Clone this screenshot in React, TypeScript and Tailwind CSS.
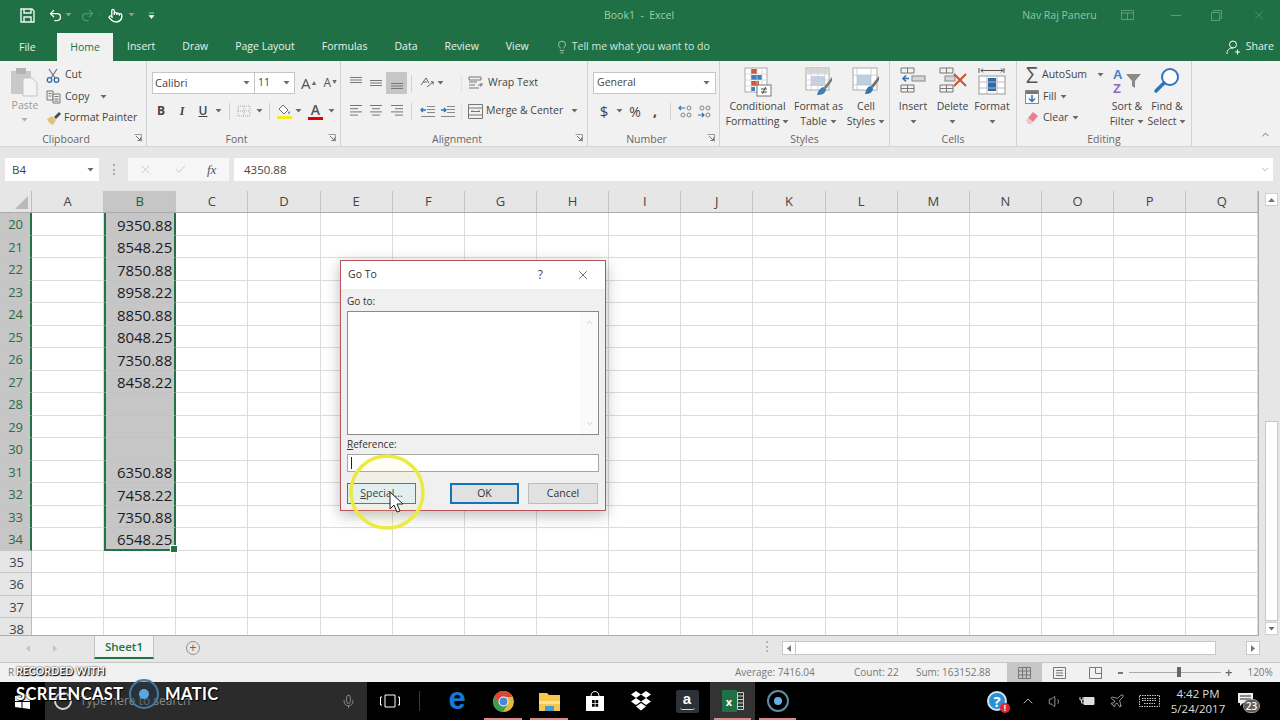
import type { ReactNode } from "react"
import { Check, ChevronUp, Lightbulb, Mic, Plane, Redo2, Undo2, Pointer, Volume1, X } from "lucide-react"

const columns = ["A", "B", "C", "D", "E", "F", "G", "H", "I", "J", "K", "L", "M", "N", "O", "P", "Q"]
const rows: [number, string][] = [
  [20, "9350.88"],
  [21, "8548.25"],
  [22, "7850.88"],
  [23, "8958.22"],
  [24, "8850.88"],
  [25, "8048.25"],
  [26, "7350.88"],
  [27, "8458.22"],
  [28, ""],
  [29, ""],
  [30, ""],
  [31, "6350.88"],
  [32, "7458.22"],
  [33, "7350.88"],
  [34, "6548.25"],
  [35, ""],
  [36, ""],
  [37, ""],
  [38, ""],
]

function Caret({ className = "" }: { className?: string }) {
  return (
    <svg width="7" height="4" viewBox="0 0 7 4" className={`shrink-0 ${className}`}>
      <path d="M0.5 0h6L3.5 3.5z" fill="#6a6a6a" />
    </svg>
  )
}

function Launcher() {
  return (
    <svg width="9" height="9" viewBox="0 0 9 9" className="absolute right-[3px] bottom-[3px]">
      <path d="M0.5 0.5h7v7" fill="none" stroke="#9a9a9a" />
      <path d="M2 2l4 4M3.500 6.500h3v-3" fill="none" stroke="#777" />
    </svg>
  )
}

function Group({ width, label, launcher, children }: { width: number; label: string; launcher?: boolean; children: ReactNode }) {
  return (
    <div className="relative flex flex-col shrink-0 h-[85px] border-r border-[#d2d2d2]" style={{ width }}>
      <div className="flex-1 min-h-0 pt-[2px]">{children}</div>
      <div className={`h-[16px] leading-[18px] text-center text-[10.5px] text-[#666] ${launcher ? "pr-[14px]" : ""}`}>{label}</div>
      {launcher && <Launcher />}
    </div>
  )
}

function AlignLines({ kind, y = 0 }: { kind: "left" | "center" | "right" | "top" | "middle" | "bottom"; y?: number }) {
  const lines =
    kind === "left"
      ? [[1, 13], [1, 9], [1, 13], [1, 9]]
      : kind === "center"
        ? [[1, 13], [3, 11], [1, 13], [3, 11]]
        : kind === "right"
          ? [[1, 13], [5, 13], [1, 13], [5, 13]]
          : [[1, 13], [1, 13], [1, 13]]
  const start = kind === "top" ? 1 : kind === "middle" ? 4 : kind === "bottom" ? 7 : 1
  return (
    <svg width="14" height="14" viewBox="0 0 14 14" style={{ marginTop: y }}>
      {lines.map((l, i) => (
        <line key={i} x1={l[0]} x2={l[1]} y1={start + i * (lines.length === 3 ? 2.5 : 3.2) + 0.5} y2={start + i * (lines.length === 3 ? 2.5 : 3.2) + 0.5} stroke="#777" />
      ))}
    </svg>
  )
}

function Paste() {
  return (
    <svg width="28" height="30" viewBox="0 0 28 30">
      <rect x="1" y="4" width="20" height="23" rx="1" fill="#c9c9c9" />
      <rect x="6" y="1" width="10" height="6" fill="#b4b4b4" />
      <path d="M13 11h9l5 5v13H13z" fill="#f4f4f4" stroke="#c4c4c4" />
    </svg>
  )
}

function Scissors() {
  return (
    <svg width="14" height="15" viewBox="0 0 14 15" fill="none">
      <path d="M3 1l6 9M11 1L5 10" stroke="#7a7a7a" strokeWidth="1.300" />
      <circle cx="3.500" cy="12" r="2.300" stroke="#2b6cb0" strokeWidth="1.300" />
      <circle cx="10.500" cy="12" r="2.300" stroke="#2b6cb0" strokeWidth="1.300" />
    </svg>
  )
}

function CopyIcon() {
  return (
    <svg width="15" height="14" viewBox="0 0 15 14" fill="none" stroke="#777">
      <path d="M1 1h6v9H1zM2.500 3.500h3M2.500 6h3" />
      <path d="M7 4h7v9H7z" fill="#f1f1f1" />
      <path d="M8.500 6.500h4M8.500 9h4M8.500 11h4" />
    </svg>
  )
}

function Brush() {
  return (
    <svg width="16" height="15" viewBox="0 0 16 15">
      <path d="M1 8l5-3 4 4-3 5c-2-.5-5-3-6-6z" fill="#e2c17a" />
      <path d="M8 6l5-5 2 2-5 5z" fill="#4a4a4a" />
    </svg>
  )
}

function FillColor() {
  return (
    <div className="flex flex-col items-center w-[16px]">
      <svg width="15" height="12" viewBox="0 0 15 12" fill="none">
        <path d="M6 1l5 5-4 4-5-5z" fill="#fff" stroke="#666" />
        <path d="M12 7c1 1.500 1.500 2.500 0 3-1.300-.5-1-1.500 0-3z" fill="#3a7ec0" />
      </svg>
      <div className="w-[15px] h-[3px] bg-[#f5ec1f]" />
    </div>
  )
}

function CondFormat() {
  return (
    <svg width="28" height="30" viewBox="0 0 28 30">
      <rect x="1" y="1" width="22" height="24" fill="#fff" stroke="#aaa" />
      <rect x="7" y="2" width="6" height="5" fill="#c65d34" />
      <rect x="7" y="8" width="11" height="5" fill="#3f7fc1" />
      <rect x="7" y="14" width="8" height="5" fill="#c65d34" />
      <rect x="7" y="20" width="4" height="4" fill="#3f7fc1" />
      <path d="M7 1v24M13 1v24M18 1v24M1 7h22M1 13h22M1 19h22" stroke="#cfcfcf" fill="none" strokeWidth=".7" />
      <rect x="13" y="18" width="14" height="11" fill="#fff" stroke="#777" />
      <path d="M17 22h6M17 25h6M21.500 20l-3 7" stroke="#444" fill="none" />
    </svg>
  )
}

function FormatTable() {
  return (
    <svg width="28" height="30" viewBox="0 0 28 30">
      <rect x="1" y="1" width="23" height="22" fill="#fff" stroke="#aaa" />
      <rect x="1.500" y="1.500" width="22" height="5" fill="#d8d8d8" />
      <rect x="6" y="9" width="14" height="10" fill="#c3d3e3" />
      <path d="M6 1v22M13 1v22M20 1v22M1 7h23M1 13h23M1 18h23" stroke="#ccc" fill="none" strokeWidth=".7" />
      <path d="M27 10l-8 10 2 2 6-8z" fill="#7b7b7b" />
      <path d="M19 20c-3 0-6 3-7 8 4 0 9-1 9-6z" fill="#3e7fb8" />
    </svg>
  )
}

function CellStyles() {
  return (
    <svg width="28" height="30" viewBox="0 0 28 30">
      <rect x="1" y="1" width="24" height="22" fill="#fff" stroke="#aaa" />
      <rect x="5" y="8" width="14" height="10" fill="#bcd0e2" />
      <path d="M5 1v22M19 1v22M1 8h24M1 18h24" stroke="#bbb" fill="none" strokeWidth=".7" />
      <path d="M27 9l-8 10 2 2 6-8z" fill="#6f6f6f" />
      <path d="M19 19c-3 0-5 3-6 8 4 0 8-1 8-6z" fill="#2f76b5" />
    </svg>
  )
}

function InsertCells() {
  return (
    <svg width="27" height="26" viewBox="0 0 27 26" fill="none">
      <path d="M1 1h13v5H1zM7.500 1v5M1 18h13v7H1zM7.500 18v7M1 21.500h13" stroke="#777" />
      <rect x="12" y="9" width="13" height="5" fill="#d6d6d6" stroke="#888" />
      <path d="M9 11.500H3M6 8.500l-3 3 3 3" stroke="#2e74b5" strokeWidth="1.600" />
    </svg>
  )
}

function DeleteCells() {
  return (
    <svg width="28" height="26" viewBox="0 0 28 26" fill="none">
      <path d="M1 1h13v5H1zM7.500 1v5M1 18h13v7H1zM7.500 18v7M1 21.500h13" stroke="#777" />
      <rect x="6" y="9" width="10" height="5" fill="#d6d6d6" stroke="#888" />
      <path d="M15 7l12 12M27 7L15 19" stroke="#d24726" strokeWidth="1.800" />
    </svg>
  )
}

function FormatCells() {
  return (
    <svg width="28" height="30" viewBox="0 0 28 30" fill="none">
      <path d="M1 1v5M26 1v5M3 3.500h22M3 3.500l2-2M3 3.500l2 2M25 3.500l-2-2M25 3.500l-2 2" stroke="#555" />
      <rect x="1" y="9" width="26" height="18" fill="#fff" stroke="#999" />
      <rect x="10" y="11" width="8" height="13" fill="#2e6ca8" />
      <path d="M9 9v18M19 9v18M1 15h26M1 21h26" stroke="#bbb" />
    </svg>
  )
}

function Eraser() {
  return (
    <svg width="14" height="14" viewBox="0 0 14 14">
      <path d="M8 1l5 4-5 6-5-4z" fill="#ee7c8e" />
      <path d="M3 7l5 4-2 2H3L1 10z" fill="#f4c2ca" />
    </svg>
  )
}

function SortIcon() {
  return (
    <svg width="30" height="30" viewBox="0 0 30 30">
      <path d="M14 7h15l-6 7v7l-3-2v-5z" fill="#8a8a8a" />
      <text x="1" y="12" fontSize="13" fontWeight="700" fill="#3c83c5" fontFamily="'Liberation Sans',sans-serif">A</text>
      <text x="1" y="26" fontSize="13" fontWeight="700" fill="#8c6bb8" fontFamily="'Liberation Sans',sans-serif">Z</text>
    </svg>
  )
}

function FindIcon() {
  return (
    <svg width="28" height="28" viewBox="0 0 28 28" fill="none">
      <circle cx="17" cy="10" r="8" fill="#fff" stroke="#2e75b6" strokeWidth="2" />
      <path d="M11 16l-8 8" stroke="#2e75b6" strokeWidth="3.500" strokeLinecap="round" />
    </svg>
  )
}

function Big({ width, lines, caret, icon }: { width: number; lines: string[]; caret?: boolean; icon: ReactNode }) {
  return (
    <div className="flex flex-col items-center shrink-0" style={{ width }}>
      <div className="h-[36px] pt-[4px] flex items-start justify-center">{icon}</div>
      <div className="leading-[15px] text-center whitespace-nowrap">{lines[0]}</div>
      <div className="leading-[15px] flex items-center justify-center gap-[3px] whitespace-nowrap h-[15px]">
        {lines[1]}
        {caret && <Caret />}
      </div>
    </div>
  )
}

function Ribbon() {
  return (
    <div className="flex h-[86px] shrink-0 bg-[#f1f1f1] border-b border-[#d4d4d4] text-[10.5px] text-[#444]">
      <Group width={147} label="Clipboard" launcher>
        <div className="flex">
          <div className="w-[46px] flex flex-col items-center pl-[2px] pt-[4px] text-[#9a9a9a]">
            <Paste />
            <div className="mt-[1px] leading-[15px] ml-[2px]">Paste</div>
            <Caret className="mt-[5px] opacity-50" />
          </div>
          <div className="flex flex-col pt-[1px]">
            <div className="h-[22px] flex items-center gap-[5px]"><Scissors /><span>Cut</span></div>
            <div className="h-[21px] flex items-center gap-[4px]"><CopyIcon /><span>Copy</span><Caret className="ml-[6px]" /></div>
            <div className="h-[22px] flex items-center gap-[2px] whitespace-nowrap"><Brush /><span>Format Painter</span></div>
          </div>
        </div>
      </Group>
      <Group width={194} label="Font" launcher>
        <div className="pl-[5px] pt-[9px]">
          <div className="flex items-center h-[22px]">
            <div className="w-[103px] h-full bg-white border border-[#c6c6c6] flex items-center justify-between pl-[2px] pr-[4px] text-[11px]">Calibri<Caret /></div>
            <div className="w-[40px] h-full bg-white border border-l-0 border-[#c6c6c6] flex items-center justify-between pl-[3px] pr-[4px]">11<Caret /></div>
            <span className="ml-[6px] text-[15px] leading-none text-[#555]">A<sup className="text-[7px] text-[#666]">▲</sup></span>
            <span className="ml-[6px] text-[12px] leading-none text-[#555]">A<sup className="text-[7px] text-[#666]">▼</sup></span>
          </div>
          <div className="flex items-center h-[22px] mt-[6px]">
            <span className="w-[18px] text-center font-bold text-[12px]">B</span>
            <span className="w-[24px] text-center italic font-bold text-[12px] font-['Liberation_Serif',serif]">I</span>
            <span className="w-[18px] text-center underline text-[12px] font-semibold">U</span>
            <Caret className="ml-[3px]" />
            <div className="ml-[7px] w-px h-[17px] bg-[#d0d0d0]" />
            <svg width="14" height="12" viewBox="0 0 14 12" className="ml-[7px]" fill="none" stroke="#aaa" strokeDasharray="1 1">
              <path d="M1 1h12v10H1zM7 1v10M1 6h12" />
            </svg>
            <Caret className="ml-[5px]" />
            <div className="ml-[6px] w-px h-[17px] bg-[#d0d0d0]" />
            <div className="ml-[6px]"><FillColor /></div>
            <Caret className="ml-[3px]" />
            <div className="ml-[5px] w-[17px] flex flex-col items-center text-[14px] leading-[13px] font-semibold text-[#555]">A<div className="w-[15px] h-[3px] bg-[#e00000] mt-[1px]" /></div>
            <Caret className="ml-[4px]" />
          </div>
        </div>
      </Group>
      <Group width={247} label="Alignment" launcher>
        <div className="pl-[4px] pt-[9px]">
          <div className="flex items-center h-[22px]">
            <div className="w-[21px] flex justify-center"><AlignLines kind="top" /></div>
            <div className="w-[20px] flex justify-center"><AlignLines kind="middle" /></div>
            <div className="w-[21px] h-[22px] bg-[#c6c6c6] flex justify-center items-center"><AlignLines kind="bottom" /></div>
            <div className="ml-[4px] w-px h-[17px] bg-[#d0d0d0]" />
            <svg width="15" height="14" viewBox="0 0 15 14" className="ml-[8px]" fill="none" stroke="#666">
              <path d="M1 9l5-7 3 5M3 6h4M7 11l6-5M11 5.500l2.500 .5-.5 2.500" />
            </svg>
            <Caret className="ml-[2px]" />
            <div className="ml-[17px] w-px h-[17px] bg-[#e2e2e2]" />
            <svg width="16" height="14" viewBox="0 0 16 14" className="ml-[6px]" fill="none" stroke="#777">
              <path d="M1 1h12v3H1zM1 6h8M1 9h6M1 12h10M10 9h4v-2M14 9l-2-1.500M14 9l-2 1.500" />
            </svg>
            <span className="ml-[4px] whitespace-nowrap">Wrap Text</span>
          </div>
          <div className="flex items-center h-[22px] mt-[6px]">
            <div className="w-[21px] flex justify-center"><AlignLines kind="left" /></div>
            <div className="w-[20px] flex justify-center"><AlignLines kind="center" /></div>
            <div className="w-[21px] flex justify-center"><AlignLines kind="right" /></div>
            <div className="ml-[4px] w-px h-[17px] bg-[#d0d0d0]" />
            <svg width="16" height="13" viewBox="0 0 16 13" className="ml-[8px]" fill="none">
              <path d="M7 1.500h8M7 4.500h8M7 7.500h8M1 11.500h14" stroke="#888" />
              <path d="M6 5H1M3 3L1 5l2 2" stroke="#2e75b6" strokeWidth="1.400" />
            </svg>
            <svg width="16" height="13" viewBox="0 0 16 13" className="ml-[4px]" fill="none">
              <path d="M7 1.500h8M7 4.500h8M7 7.500h8M1 11.500h14" stroke="#888" />
              <path d="M1 5h5M4 3l2 2-2 2" stroke="#2e75b6" strokeWidth="1.400" />
            </svg>
            <div className="ml-[5px] w-px h-[17px] bg-[#e2e2e2]" />
            <svg width="15" height="15" viewBox="0 0 15 15" className="ml-[6px]" fill="none" stroke="#777">
              <path d="M.5 .5h14v14H.5zM.5 4h14M.5 11h14M3 7.500h9M3 7.500l1.500-1M12 7.500l-1.500-1" />
            </svg>
            <span className="ml-[3px] whitespace-nowrap">Merge &amp; Center</span>
            <Caret className="ml-[8px]" />
          </div>
        </div>
      </Group>
      <Group width={132} label="Number" launcher>
        <div className="pl-[5px] pt-[9px]">
          <div className="w-[123px] h-[22px] bg-white border border-[#c6c6c6] flex items-center justify-between pl-[3px] pr-[5px]">General<Caret /></div>
          <div className="flex items-center h-[22px] mt-[6px] pl-[5px]">
            <span className="text-[15px] w-[12px] text-center">$</span>
            <Caret className="ml-[6px]" />
            <span className="ml-[2px] text-[14px] w-[20px] text-center">%</span>
            <span className="ml-[5px] w-[10px] text-center font-bold text-[14px] leading-[10px]">,</span>
            <div className="ml-[10px] w-px h-[17px] bg-[#d0d0d0]" />
            <svg width="15" height="13" viewBox="0 0 15 13" className="ml-[7px]" fill="none" stroke="#777" strokeWidth=".9">
              <circle cx="11" cy="3" r="2" />
              <circle cx="5" cy="10" r="2" />
              <circle cx="11" cy="10" r="2" />
              <path d="M7 3H1M3 1L1 3l2 2" stroke="#2e75b6" strokeWidth="1.200" />
            </svg>
            <svg width="15" height="13" viewBox="0 0 15 13" className="ml-[4px]" fill="none" stroke="#777" strokeWidth=".9">
              <circle cx="5" cy="3" r="2" />
              <circle cx="11" cy="3" r="2" />
              <circle cx="11" cy="10" r="2" />
              <path d="M1 10h6M5 8l2 2-2 2" stroke="#2e75b6" strokeWidth="1.200" />
            </svg>
          </div>
        </div>
      </Group>
      <Group width={170} label="Styles">
        <div className="flex pl-[5px]">
          <Big width={65} lines={["Conditional", "Formatting"]} caret icon={<CondFormat />} />
          <Big width={57} lines={["Format as", "Table"]} caret icon={<FormatTable />} />
          <Big width={38} lines={["Cell", "Styles"]} caret icon={<CellStyles />} />
        </div>
      </Group>
      <Group width={127} label="Cells">
        <div className="flex pl-[4px]">
          <Big width={38} lines={["Insert", ""]} caret icon={<InsertCells />} />
          <Big width={41} lines={["Delete", ""]} caret icon={<DeleteCells />} />
          <Big width={38} lines={["Format", ""]} caret icon={<FormatCells />} />
        </div>
      </Group>
      <Group width={175} label="Editing">
        <div className="flex pl-[8px]">
          <div className="w-[82px] flex flex-col pt-[1px]">
            <div className="h-[22px] flex items-center gap-[3px]"><span className="w-[14px] text-[21px] leading-none text-center text-[#555]">Σ</span><span>AutoSum</span><Caret className="ml-[7px]" /></div>
            <div className="h-[21px] flex items-center gap-[4px]">
              <svg width="14" height="14" viewBox="0 0 14 14" fill="none">
                <rect x=".5" y=".5" width="13" height="13" fill="#fff" stroke="#888" />
                <rect x="1" y="1" width="12" height="3" fill="#777" />
                <path d="M7 5v6M4 8.500L7 11.500l3-3" stroke="#2e75b6" strokeWidth="1.500" />
              </svg>
              <span>Fill</span><Caret />
            </div>
            <div className="h-[22px] flex items-center gap-[4px]"><Eraser /><span>Clear</span><Caret /></div>
          </div>
          <Big width={40} lines={["Sort &", "Filter"]} caret icon={<SortIcon />} />
          <Big width={40} lines={["Find &", "Select"]} caret icon={<FindIcon />} />
        </div>
      </Group>
      <div className="flex-1 flex items-end justify-end pr-[9px] pb-[6px]">
        <ChevronUp size={11} strokeWidth={2} className="text-[#666]" />
      </div>
    </div>
  )
}

function TitleBar() {
  return (
    <div className="bg-[#1f7145] shrink-0">
      <div className="h-[30px] flex items-center relative">
        <svg width="15" height="15" viewBox="0 0 15 15" className="ml-[20px]" fill="none" stroke="#f4f4f4" strokeWidth="1.400">
          <path d="M1 1h11l2 2v11H1zM4 1v4h7V1M4 14V9h7v5" />
        </svg>
        <Undo2 size={15} strokeWidth={2} className="ml-[13px] text-white" />
        <Caret className="ml-[2px] invert" />
        <Redo2 size={15} strokeWidth={2} className="ml-[8px] text-[#4f9570]" />
        <Caret className="ml-[1px] opacity-30" />
        <Pointer size={15} strokeWidth={2} className="ml-[5px] text-white" />
        <Caret className="ml-[5px] invert" />
        <svg width="7" height="7" viewBox="0 0 7 7" className="ml-[13px]">
          <path d="M1 1h5M1 3.500h5L3.500 6.500z" fill="#fff" stroke="#fff" strokeWidth=".6" />
        </svg>
        <div className="ml-[449px] pt-[2px] text-[10.5px] text-[#9ccfb1] whitespace-pre">Book1  -  Excel</div>
        <div className="ml-[348px] pt-[2px] text-[10.5px] text-[#8fc6a6] whitespace-nowrap">Nav Raj Paneru</div>
        <svg width="13" height="10" viewBox="0 0 13 10" className="ml-[24px]" fill="none" stroke="#5c9c79">
          <path d="M.5 .5h12v9H.5zM.5 3h12M6.500 3v6.500" />
        </svg>
        <div className="ml-[37px] w-[10px] h-px bg-[#5c9c79]" />
        <svg width="11" height="11" viewBox="0 0 11 11" className="ml-[30px]" fill="none" stroke="#5c9c79">
          <path d="M.5 2.500h8v8h-8zM2.500 2.500v-2h8v8h-2" />
        </svg>
        <X size={14} strokeWidth={1} className="ml-[30px] text-[#6aa585]" />
      </div>
      <div className="h-[31px] flex items-end text-[10.5px] text-[#e6f1ea]">
        <div className="w-[57px] h-[30px] leading-[32px] pl-[19px]">File</div>
        <div className="w-[56px] h-[28px] leading-[29px] text-center bg-[#f1f1f1] text-[#1f7145]">Home</div>
        <div className="flex items-center h-[30px] gap-[27px] pl-[14px] pt-[2px]">
          <span>Insert</span>
          <span>Draw</span>
          <span className="whitespace-nowrap">Page Layout</span>
          <span>Formulas</span>
          <span>Data</span>
          <span>Review</span>
          <span>View</span>
        </div>
        <div className="flex items-center h-[30px] ml-[26px] pt-[2px] gap-[3px] text-[#d4e7da]">
          <Lightbulb size={14} strokeWidth={1.200} />
          <span className="whitespace-nowrap">Tell me what you want to do</span>
        </div>
        <div className="flex items-center h-[30px] ml-auto pr-[6px] pt-[2px] gap-[5px]">
          <svg width="15" height="15" viewBox="0 0 15 15" fill="none" stroke="#fff">
            <circle cx="7" cy="4.500" r="3.500" />
            <path d="M1 14c0-4 2-6 6-6M9 12h5M11.500 9.500v5" />
          </svg>
          <span>Share</span>
        </div>
      </div>
    </div>
  )
}

function FormulaBar() {
  return (
    <div className="h-[44px] shrink-0 bg-[#e6e6e6] flex items-start pt-[11px] text-[11.5px] text-[#444]">
      <div className="ml-[5px] w-[94px] h-[23px] bg-white flex items-center justify-between pl-[7px] pr-[5px]">B4<Caret /></div>
      <div className="ml-[14px] w-[2px] h-[11px] mt-[6px] border-l-2 border-dotted border-[#aaa]" />
      <div className="ml-[13px] w-[101px] h-[23px] bg-[#f6f6f6] flex items-center pl-[11px] text-[#c2c2c2]">
        <X size={13} strokeWidth={1.500} />
        <Check size={13} strokeWidth={1.500} className="ml-[22px]" />
        <span className="ml-[20px] italic text-[#555] font-['Liberation_Serif',serif] text-[13px]">fx</span>
      </div>
      <div className="ml-[5px] w-[1039px] h-[23px] bg-white flex items-center justify-between pl-[10px] pr-[4px]">
        4350.88
        <svg width="8" height="5" viewBox="0 0 8 5" fill="none" stroke="#bbb"><path d="M1 1l3 3 3-3" /></svg>
      </div>
    </div>
  )
}

function Sheet() {
  return (
    <div className="flex flex-1 min-h-0 bg-[#e6e6e6]">
      <div className="w-[1259px] flex flex-col overflow-hidden border-r border-b border-[#ababab] bg-white">
        <div className="flex h-[22px] shrink-0 bg-[#e6e6e6] border-b border-[#ababab] text-[13px] text-[#444]">
          <div className="w-[32px] shrink-0 flex items-end justify-end pr-[3px] pb-[3px] border-r border-[#bdbdbd]">
            <svg width="13" height="13" viewBox="0 0 13 13"><path d="M13 0v13H0z" fill="#b9b9b9" /></svg>
          </div>
          {columns.map((c) => (
            <div
              key={c}
              className={`w-[72.15px] shrink-0 flex items-center justify-center border-r border-[#c4c4c4] ${c === "B" ? "bg-[#c6c6c6] text-[#1f5f3c]" : ""}`}
            >
              {c}
            </div>
          ))}
        </div>
        {rows.map(([n, value]) => {
          const selected = n <= 34
          return (
            <div key={n} className="flex h-[22.5px] shrink-0">
              <div
                className={`w-[32px] shrink-0 flex items-center justify-end pr-[7px] pt-[2px] text-[13px] border-b border-[#c4c4c4] ${
                  selected ? "bg-[#c6c6c6] text-[#2c6b49] border-r-2 border-r-[#217346]" : "bg-[#e6e6e6] text-[#444] border-r border-r-[#bdbdbd]"
                }`}
              >
                {n}
              </div>
              {columns.map((c) => {
                if (c === "B" && selected) {
                  return (
                    <div
                      key={c}
                      className={`relative w-[72.15px] shrink-0 flex items-center justify-end pr-[2px] pt-[2px] bg-[#c6c6c6] text-[15px] text-[#1c1c1c] border-x-2 border-[#217346] ${
                        n === 34 ? "border-b-2" : "border-b border-b-[#c2c2c2]"
                      }`}
                    >
                      {value}
                      {n === 34 && <div className="absolute right-[-4px] bottom-[-4px] w-[6px] h-[6px] bg-[#217346] border border-white box-content" />}
                    </div>
                  )
                }
                return <div key={c} className="w-[72.15px] shrink-0 border-r border-b border-[#dcdcdc]" />
              })}
            </div>
          )
        })}
      </div>
      <div className="flex-1 flex flex-col items-center pt-[2px] pb-[1px] pl-[3px]">
        <div className="w-[13px] h-[13px] bg-white border border-[#d0d0d0] flex items-center justify-center">
          <svg width="7" height="4" viewBox="0 0 7 4"><path d="M0 4h7L3.500 0z" fill="#777" /></svg>
        </div>
        <div className="w-[13px] flex-1 flex flex-col justify-end mb-[1px]">
          <div className="h-[200px] bg-white border border-[#c8c8c8]" />
        </div>
        <div className="w-[13px] h-[13px] bg-white border border-[#d0d0d0] flex items-center justify-center">
          <Caret />
        </div>
      </div>
    </div>
  )
}

function TabBar() {
  return (
    <div className="h-[26px] shrink-0 bg-[#e6e6e6] flex items-start text-[11.5px]">
      <svg width="4" height="7" viewBox="0 0 4 7" className="ml-[26px] mt-[9px]"><path d="M4 0v7L0 3.500z" fill="#c4c4c4" /></svg>
      <svg width="4" height="7" viewBox="0 0 4 7" className="ml-[23px] mt-[9px]"><path d="M0 0v7l4-3.500z" fill="#c4c4c4" /></svg>
      <div className="ml-[37px] w-[60px] h-[23px] bg-[#f4f4f4] border-b-2 border-[#217346] border-x border-x-[#c4c4c4] flex items-center justify-center font-semibold text-[#217346]">
        Sheet1
      </div>
      <div className="ml-[32px] mt-[5px] w-[14px] h-[14px] rounded-full border border-[#8f8f8f] flex items-center justify-center text-[#666] text-[12px] leading-none">+</div>
      <div className="ml-[566px] mt-[5px] w-[2px] h-[11px] border-l-2 border-dotted border-[#b5b5b5]" />
      <div className="ml-[14px] mt-[5px] w-[14px] h-[14px] bg-white border border-[#c8c8c8] flex items-center justify-center">
        <svg width="4" height="7" viewBox="0 0 4 7"><path d="M4 0v7L0 3.500z" fill="#777" /></svg>
      </div>
      <div className="mt-[5px] w-[420px] h-[14px] bg-white border-y border-r border-[#c8c8c8]" />
      <div className="ml-[30px] mt-[5px] w-[14px] h-[14px] bg-white border border-[#c8c8c8] flex items-center justify-center">
        <svg width="4" height="7" viewBox="0 0 4 7"><path d="M0 0v7l4-3.500z" fill="#777" /></svg>
      </div>
    </div>
  )
}

function StatusBar() {
  return (
    <div className="h-[20px] shrink-0 bg-[#f1f1f1] border-t border-[#c6c6c6] flex items-center text-[10px] text-[#777] whitespace-nowrap">
      <span className="ml-[8px] w-[727px]">R</span>
      <span className="w-[119px]">Average: 7416.04</span>
      <span className="w-[62px]">Count: 22</span>
      <span className="w-[91px]">Sum: 163152.88</span>
      <div className="w-[35px] h-[20px] bg-[#c6c6c6] flex items-center justify-center">
        <svg width="13" height="12" viewBox="0 0 13 12" fill="none" stroke="#777"><path d="M.5 .5h12v11H.5zM4.500 .5v11M8.500 .5v11M.5 4h12M.5 8h12" /></svg>
      </div>
      <svg width="13" height="12" viewBox="0 0 13 12" className="ml-[11px]" fill="none" stroke="#777"><path d="M.5 .5h12v11H.5zM3 3.500h7M3 6h7M3 8.500h7" /></svg>
      <svg width="13" height="12" viewBox="0 0 13 12" className="ml-[23px]" fill="none" stroke="#777"><path d="M.5 .5h12v11H.5zM6.500 .5v6h6" /></svg>
      <span className="ml-[16px] w-[5px] h-[2px] bg-[#777]" />
      <div className="relative ml-[6px] w-[92px] h-px bg-[#aaa]">
        <div className="absolute left-[48px] top-[-5px] w-[4px] h-[10px] bg-[#666]" />
      </div>
      <span className="ml-[4px] text-[13px] font-semibold leading-none text-[#666]">+</span>
      <span className="ml-[15px]">120%</span>
    </div>
  )
}

function Dropbox() {
  return (
    <svg width="22" height="21" viewBox="0 0 22 21" fill="#fff">
      <path d="M6 0l5 3.500L6 7 1 3.500zM16 0l5 3.500L16 7l-5-3.500zM6 7l5 3.500L6 14l-5-3.500zM16 7l5 3.500-5 3.500-5-3.500zM11 12l5 3.500-5 4-5-4z" />
    </svg>
  )
}

function Chrome() {
  return (
    <svg width="21" height="21" viewBox="0 0 21 21">
      <circle cx="10.500" cy="10.500" r="10.500" fill="#e2b93b" />
      <path d="M10.500 0A10.500 10.500 0 0 0 1.400 5.300l4.500 7.700L10.500 6h9A10.500 10.500 0 0 0 10.500 0z" fill="#d9473c" />
      <path d="M1.400 5.300A10.500 10.500 0 0 0 10 21l4.500-7.500H7z" fill="#3e9b55" />
      <circle cx="10.500" cy="10.500" r="5" fill="#fff" />
      <circle cx="10.500" cy="10.500" r="4" fill="#4a86d8" />
    </svg>
  )
}

function TaskIcon({ children, active, underline, width = 46 }: { children: ReactNode; active?: boolean; underline?: boolean; width?: number }) {
  return (
    <div className={`h-[38px] shrink-0 flex items-center justify-center ${active ? "bg-[#333]" : ""} ${underline ? "relative" : ""}`} style={{ width }}>
      {children}
      {underline && <div className="absolute left-[4px] right-[4px] bottom-0 h-[2px] bg-[#d88a8a]" />}
    </div>
  )
}

function Taskbar() {
  return (
    <div className="h-[38px] shrink-0 bg-black flex items-center text-white">
      <div className="w-[45px] flex justify-center">
        <svg width="15" height="15" viewBox="0 0 15 15" fill="#fff"><path d="M0 2l6.500-1v6H0zM7.500 .8L15 0v7H7.500zM0 8h6.500v6L0 13zM7.500 8H15v7l-7.500-1z" /></svg>
      </div>
      <div className="w-[322px] h-[38px] bg-[#2b2b2b] flex items-center pl-[9px] text-[12px] text-[#8a8a8a]">
        <div className="w-[18px] h-[18px] rounded-full border-2 border-[#d8d8d8]" />
        <span className="ml-[8px] whitespace-nowrap">Type here to search</span>
        <Mic size={15} strokeWidth={1.200} className="ml-[151px] text-[#a0a0a0]" />
      </div>
      <div className="w-[46px] flex justify-center">
        <svg width="20" height="14" viewBox="0 0 20 14" fill="none" stroke="#fff"><path d="M5 1h10v12H5zM2 3H.5v8H2M18 3h1.500v8H18" /></svg>
      </div>
      <div className="ml-[6px] w-px h-[20px] bg-[#3a3a3a]" />
      <div className="w-[14px]" />
      <TaskIcon><span className="text-[31px] leading-none font-bold text-[#1478d4] font-['Liberation_Sans',sans-serif] -mt-[6px]">e</span></TaskIcon>
      <TaskIcon underline><Chrome /></TaskIcon>
      <TaskIcon underline>
        <svg width="21" height="19" viewBox="0 0 21 19"><path d="M0 1h8l2 2h11v16H0z" fill="#f4c74f" /><rect x="0" y="9" width="21" height="3" fill="#fbe28f" /><path d="M6 19v-5h9v5z" fill="#3fa0d8" /></svg>
      </TaskIcon>
      <TaskIcon>
        <svg width="20" height="22" viewBox="0 0 20 22" fill="none"><path d="M6 6c0-6 8-6 8 0" stroke="#fff" /><path d="M1 6h18v15H1z" fill="#fff" /><path d="M7 10h2.700v3H7zM10.500 10h2.700v3h-2.700zM7 13.800h2.700v3H7zM10.500 13.800h2.700v3h-2.700z" fill="#000" /></svg>
      </TaskIcon>
      <TaskIcon><Dropbox /></TaskIcon>
      <TaskIcon>
        <div className="relative w-[23px] h-[23px] bg-[#2d3138] rounded-[2px] flex items-start justify-center text-[15px] font-bold leading-[18px] font-['Liberation_Sans',sans-serif]">
          a
          <div className="absolute left-[4px] right-[4px] bottom-[3px] h-[3px] border-b border-[#d8d8d8] rounded-b-full" />
        </div>
      </TaskIcon>
      <TaskIcon active underline width={45}>
        <div className="relative w-[22px] h-[22px] flex items-center">
          <div className="w-[15px] h-[22px] bg-[#1e7145] flex items-center justify-center text-[11px] font-bold leading-none">x</div>
          <svg width="7" height="18" viewBox="0 0 7 18" fill="none" stroke="#b8d8c4"><path d="M.5 .5h6v17h-6zM.5 4h6M.5 7.500h6M.5 11h6M.5 14.500h6" /></svg>
        </div>
      </TaskIcon>
      <TaskIcon underline width={45}>
        <div className="w-[22px] h-[22px] rounded-full border-2 border-[#5d8ba3] flex items-center justify-center">
          <div className="w-[8px] h-[8px] rounded-full bg-[#64b0e4]" />
        </div>
      </TaskIcon>
      <div className="w-[187px]" />
      <div className="relative w-[20px] h-[20px] rounded-full bg-[#2a8fd6] flex items-center justify-center text-[15px] font-bold border-2 border-[#cfe6f6] leading-none">
        ?
        <div className="absolute -right-[5px] -bottom-[4px] w-[10px] h-[10px] rounded-full bg-[#e02828] text-[8px] flex items-center justify-center">!</div>
      </div>
      <ChevronUp size={16} strokeWidth={1.200} className="ml-[13px] text-[#ddd]" />
      <Volume1 size={15} strokeWidth={1.200} className="ml-[12px] text-[#ccc]" />
      <svg width="16" height="10" viewBox="0 0 16 10" className="ml-[16px]" fill="none" stroke="#ddd">
        <path d="M5 1.500h10v7H5z" fill="#ddd" /><path d="M1 1v3h3V1M2.500 4v3h3" />
      </svg>
      <Plane size={16} strokeWidth={1} className="ml-[14px] text-[#ddd]" />
      <svg width="21" height="12" viewBox="0 0 21 12" className="ml-[14px]" fill="none" stroke="#ccc">
        <path d="M.5 .5h20v11H.5zM3 3.500h15M3 5.500h15M5 8.500h11" strokeDasharray="1.500 1" />
      </svg>
      <div className="ml-[13px] w-[50px] text-[11.5px] leading-[15px] text-center text-[#ddd] whitespace-nowrap flex flex-col items-center">
        <span>4:42 PM</span>
        <span>5/24/2017</span>
      </div>
      <div className="relative ml-[15px] w-[16px] h-[16px]">
        <svg width="15" height="13" viewBox="0 0 15 13"><path d="M0 0h15v10H5l-3 3v-3H0z" fill="#eee" /><path d="M2 3h11M2 6h11" stroke="#222" /></svg>
        <div className="absolute left-[5px] top-[6px] w-[17px] h-[14px] rounded-full bg-[#5c5c5c] border border-[#999] text-[10px] leading-[12px] text-center font-semibold">23</div>
      </div>
    </div>
  )
}

function GoToDialog() {
  return (
    <div className="absolute left-[340px] top-[260px] w-[266px] h-[251px] bg-[#f0f0f0] border border-[#b9545a] shadow-[0_4px_14px_rgba(0,0,0,0.28)] text-[10.5px] text-[#333]">
      <div className="h-[28px] bg-white flex items-center pl-[7px]">
        <span>Go To</span>
        <span className="ml-[161px] text-[12px] text-[#444]">?</span>
        <X size={14} strokeWidth={1.200} className="ml-[33px] text-[#333]" />
      </div>
      <div className="px-[6px]">
        <div className="h-[22px] leading-[24px] text-[10px]">Go to:</div>
        <div className="w-[252px] h-[124px] bg-white border border-[#8a8a8a] flex justify-end">
          <div className="w-[18px] bg-[#fafafa] flex flex-col items-center justify-between py-[6px] text-[#bdbdbd]">
            <ChevronUp size={9} strokeWidth={2} />
            <ChevronUp size={9} strokeWidth={2} className="rotate-180" />
          </div>
        </div>
        <div className="h-[19px] leading-[19px] text-[10px]"><span className="underline">R</span>eference:</div>
        <div className="w-[252px] h-[18px] bg-white border border-[#a6a6a6] flex items-center pl-[3px]">
          <div className="w-px h-[12px] bg-[#222]" />
        </div>
        <div className="flex mt-[11px]">
          <div className="w-[69px] h-[21px] bg-[#e0eef9] border border-[#2f7ba8] flex items-center justify-center"><span className="underline">S</span>pecial...</div>
          <div className="ml-[34px] w-[69px] h-[21px] bg-[#e1e1e1] border-2 border-[#1474b8] flex items-center justify-center">OK</div>
          <div className="ml-[9px] w-[70px] h-[21px] bg-[#e1e1e1] border border-[#bcbcbc] flex items-center justify-center">Cancel</div>
        </div>
      </div>
    </div>
  )
}

function Spotlight() {
  return (
    <svg width="90" height="90" viewBox="0 0 90 90" className="absolute left-[342px] top-[447px] pointer-events-none">
      <circle cx="45" cy="45" r="36" fill="rgba(250,245,120,0.07)" stroke="#ecea3f" strokeWidth="3.500" />
      <path d="M48 45v17l4-4 3 7 3-1-3-7h6z" fill="#fff" stroke="#222" strokeWidth="1" />
    </svg>
  )
}

function Watermark() {
  return (
    <div className="absolute left-[16px] top-[663px] text-white font-['Lato',sans-serif] pointer-events-none [text-shadow:0_0_2px_#000,1px_1px_1px_#000]">
      <div className="text-[10.5px] font-bold leading-[16px] tracking-[0.1px] whitespace-nowrap">RECORDED WITH</div>
      <div className="flex items-center text-[16.5px] font-bold leading-[30px] tracking-[0.4px]">
        <span className="w-[113px]">SCREENCAST</span>
        <div className="w-[30px] h-[30px] rounded-full border-2 border-[#3f7fa8] flex items-center justify-center bg-[rgba(40,60,80,0.4)]">
          <div className="w-[10px] h-[10px] rounded-full bg-[#57a8e2]" />
        </div>
        <span className="ml-[6px]">MATIC</span>
      </div>
    </div>
  )
}

export default function App() {
  return (
    <div className="relative w-[1280px] h-[720px] overflow-hidden flex flex-col bg-white font-['Open_Sans',sans-serif]">
      <TitleBar />
      <Ribbon />
      <FormulaBar />
      <Sheet />
      <TabBar />
      <StatusBar />
      <Taskbar />
      <GoToDialog />
      <Spotlight />
      <Watermark />
    </div>
  )
}
